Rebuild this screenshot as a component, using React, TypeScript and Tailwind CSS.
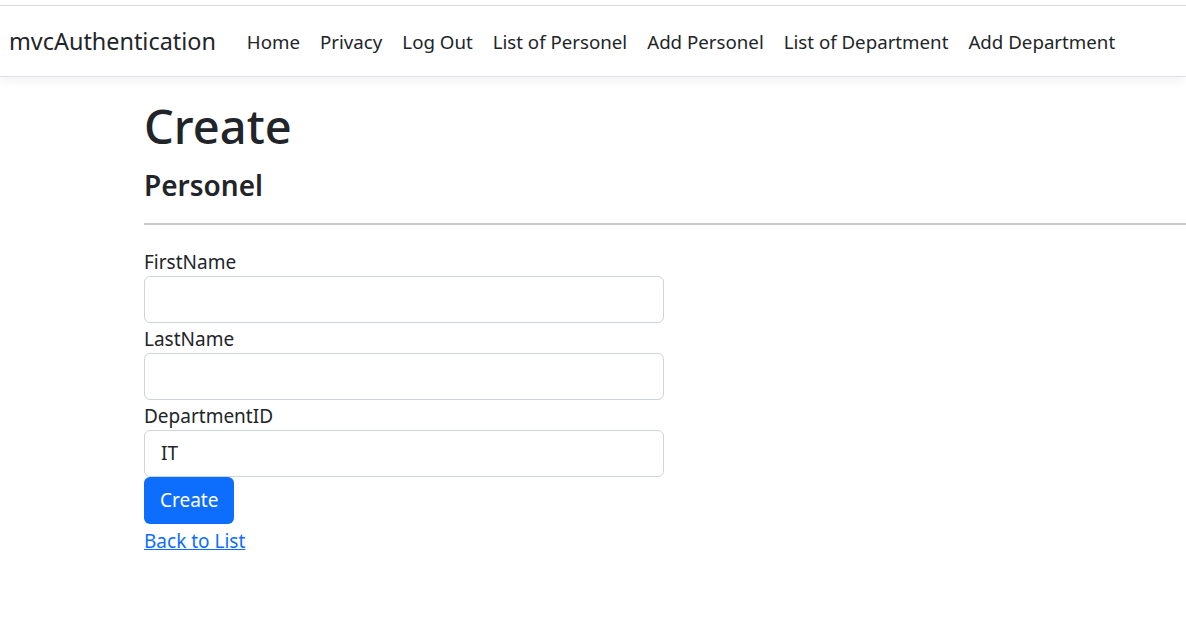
const nav = [
  "Home",
  "Privacy",
  "Log Out",
  "List of Personel",
  "Add Personel",
  "List of Department",
  "Add Department",
]

const fields = [
  { label: "FirstName", value: "" },
  { label: "LastName", value: "" },
  { label: "DepartmentID", value: "IT" },
]

export default function App() {
  return (
    <div className="min-h-[632px] bg-white text-[#212529] font-['Noto_Sans',sans-serif] overflow-hidden">
      <div className="h-[5px]" />
      <header className="h-[72px] border-y border-t-[#dadada] border-b-[#dee2e6] bg-white shadow-[0_4px_10px_rgba(0,0,0,0.05)] flex items-center pl-[9px] pt-[2px]">
        <a href="#" className="text-[23.4px] mr-[31px] whitespace-nowrap">mvcAuthentication</a>
        <nav className="flex gap-[20px] text-[18.7px] whitespace-nowrap">
          {nav.map((n) => (
            <a key={n} href="#">{n}</a>
          ))}
        </nav>
      </header>

      <main className="pl-[144px] pt-[21px]">
        <h1 className="text-[47px] font-medium leading-[1.2]">Create</h1>
        <h4 className="text-[28px] font-semibold leading-[1.2] mt-[15px]">Personel</h4>
        <hr className="mt-[20px] border-t-2 border-[#c8c9ca] mb-[21px]" />

        <form className="w-[520px] flex flex-col">
          {fields.map((f) => (
            <div key={f.label} className="flex flex-col">
              <label className="text-[19px] leading-[28px] pt-[2px]">{f.label}</label>
              <input
                defaultValue={f.value}
                className="h-[47px] border border-[#ced4da] rounded-[6px] px-[16px] text-[19px] text-[#212529] outline-none"
              />
            </div>
          ))}
          <div>
            <button
              type="submit"
              className="h-[47px] px-[16px] bg-[#0d6efd] text-white rounded-[6px] text-[19px]"
            >
              Create
            </button>
          </div>
        </form>
        <div className="mt-[2px]">
          <a href="#" className="text-[#0d6efd] underline text-[19px] leading-[30px]">Back to List</a>
        </div>
      </main>
    </div>
  )
}
